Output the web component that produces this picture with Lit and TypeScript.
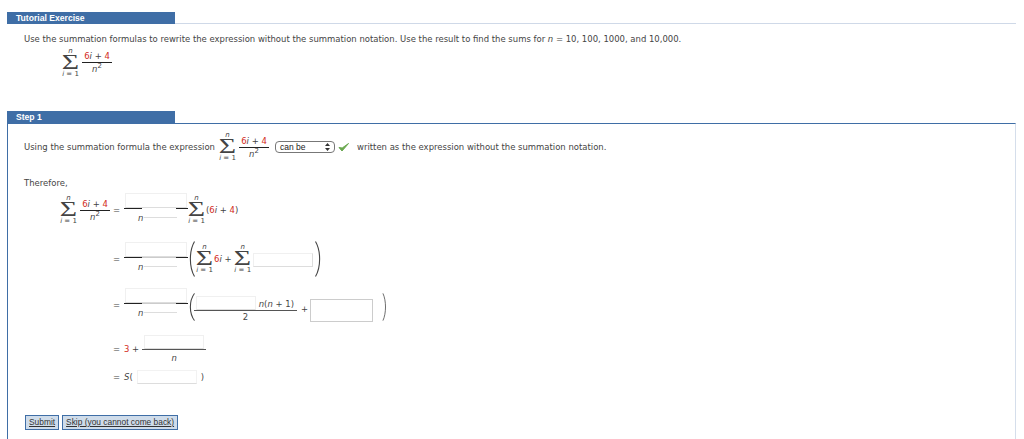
import { LitElement, html, css, svg } from "lit";
import { customElement } from "lit/decorators.js";

const sum = () => html`<span class="sum"><i class="lim">n</i><span class="sig">Σ</span><span class="low"><i>i</i> = 1</span></span>`;
const expr = html`<span class="frac main"><span class="top"><span class="red">6</span><i>i</i> + <span class="red">4</span></span><span class="bar dark"></span><span class="bot"><i>n</i><sup>2</sup></span></span>`;
const blank = html`<span class="frac blank"><span class="top"><span class="ans"></span></span><span class="bar gap"></span><span class="bot nline"><i>n</i><span class="rule"></span></span></span>`;
const paren = (cls: string, close = false) => html`<svg class="paren ${cls}" viewBox="0 0 8 36" preserveAspectRatio="none">${svg`<path d="${close ? "M1.5 0.5C7 10 7 26 1.5 35.5" : "M6.5 0.5C1 10 1 26 6.5 35.5"}" fill="none" stroke="#444" stroke-width="1.1"/>`}</svg>`;

@customElement("app-root")
export class AppRoot extends LitElement {
  static styles = css`
    :host { display: block; width: 1024px; height: 439px; overflow: hidden; background: #fff; font: 8.48px/12px "DejaVu Sans", Verdana, sans-serif; color: #444; }
    .tab { width: 168px; height: 12px; background: #3f6ea6; color: #fff; font: bold 8.6px/12px "Liberation Sans", Arial, sans-serif; padding-left: 9px; box-sizing: border-box; }
    .tab.first { height: 11px; line-height: 13px; }
    .page { padding: 12px 8px 0 7px; }
    .rule-top { height: 1px; background: linear-gradient(to right, #3f6ea6 168px, #cfd9e8 168px); }
    .intro { padding: 9px 0 0 17px; height: 87px; box-sizing: border-box; }
    .intro p { margin: 0; }
    .intro .line { height: 12px; }
    .intro .eq { display: flex; align-items: center; margin: 2px 0 0 38px; height: 31px; }
    .stepbox { border-left: 1px solid #3f6ea6; border-right: 1px solid #d5deeb; border-top: 1px solid #3f6ea6; height: 320px; padding: 8px 0 0 16px; box-sizing: border-box; }
    .usage { display: flex; align-items: center; height: 30px; }
    .usage .sum { margin-left: 4px; }
    .sel { display: flex; align-items: center; justify-content: space-between; box-sizing: border-box; width: 60px; height: 12px; margin-left: 6px; border: 1px solid #777; border-radius: 4px; padding: 0 4px; color: #222; font: 8.5px/10px "Liberation Sans", Arial, sans-serif; }
    .chk { margin: 0 8px 0 3px; }
    .therefore { margin-top: 15px; height: 12px; }
    .row { display: flex; align-items: center; }
    .r1 { height: 36px; margin-top: 3px; padding-left: 36px; }
    .r2 { height: 40px; margin-top: 11px; }
    .r3 { height: 32px; margin-top: 10px; }
    .r4 { height: 32px; margin-top: 12px; }
    .r5 { height: 18px; margin-top: 3px; }
    .ind { padding-left: 89px; }
    .eqs { width: 11px; flex: none; }
    .lhs { display: inline-flex; align-items: center; width: 53px; }
    .sum { display: inline-flex; flex-direction: column; align-items: center; width: 17px; flex: none; color: #444; }
    .lim { font-size: 7px; line-height: 6px; }
    .sig { font: 22px/15px "Liberation Serif", serif; height: 16px; transform: scaleX(1.35); }
    .low { font-size: 7px; line-height: 7px; margin-top: 1px; white-space: nowrap; }
    .frac { display: inline-grid; grid-template-rows: 15px 1px 15px; justify-items: center; flex: none; }
    .top, .bot { display: flex; align-items: center; justify-content: center; white-space: pre; }
    .top { align-items: flex-end; }
    .bot { align-items: flex-start; }
    .main { width: 30px; margin-left: 3px; }
    .main .bot { line-height: 12px; }
    sup { font-size: 7px; line-height: 6px; }
    .bar { width: 100%; height: 1px; }
    .dark { background: #222; }
    .blank { width: 64px; margin-bottom: 4px; }
    .blank .gap { background: linear-gradient(to right, #222 18px, #ccc 18px, #ccc 52px, #222 52px); }
    .r1 .blank .gap { background: linear-gradient(to right, #222 18px, #fff 18px, #fff 52px, #222 52px); }
    .ans { display: block; width: 62px; height: 15px; box-sizing: border-box; border: 1px solid #f0f0f0; border-bottom-color: #ddd; }
    .nline { width: 100%; justify-content: flex-start; padding: 5px 0 0 14px; box-sizing: border-box; line-height: 8px; }
    .rule { width: 33px; height: 1px; background: #ddd; margin: 3px 0 0 1px; }
    .red { color: #d32a22; }
    .paren { flex: none; width: 8px; height: 36px; }
    .paren.sm { height: 28px; margin-top: 4px; }
    .paren.end { width: 5px; margin-left: 9px; }
    .wide { display: inline-block; width: 60px; height: 14px; box-sizing: border-box; border: 1px solid #f0f0f0; border-right-color: #ddd; border-bottom-color: #ddd; }
    .tail { margin-left: 2px; margin-right: 1px; margin-top: 1px; }
    .r2t { margin-left: 1px; }
    .inner { display: inline-grid; grid-template-rows: 15px 1px 13px; width: 103px; margin: 9px 0 0 -2px; flex: none; }
    .inner .bar { background: #555; }
    .inner .top { justify-content: flex-start; padding-left: 2px; }
    .inner .bot { justify-content: center; }
    .small { width: 60px; height: 14px; }
    .plus { margin: 8px 0 0 4px; }
    .box { width: 63px; height: 23px; box-sizing: border-box; border: 1px solid #ccc; flex: none; margin: 10px 0 0 2px; }
    .r5 .wide { border-color: #f2f2f2 #f2f2f2 #ddd; margin: 0 4px 0 4px; }
    .r4 .frac { width: 64px; margin-left: 3px; }
    .r4 .bar { background: #555; }
    .r4 .bot { padding-top: 2px; }
    .btns { display: flex; gap: 3px; margin: 29px 0 0 1px; }
    .btn { border: 1px solid #3f6ea6; background: #cfdcea; height: 15px; box-sizing: border-box; padding: 0 3px; font: 8.4px/13px "Liberation Sans", Arial, sans-serif; color: #333; text-decoration: underline; white-space: nowrap; }
  `;
  render() {
    return html`<div class="page">
      <div class="tab first">Tutorial Exercise</div>
      <div class="rule-top"></div>
      <div class="intro">
        <p class="line">Use the summation formulas to rewrite the expression without the summation notation. Use the result to find the sums for <i>n</i> = 10, 100, 1000, and 10,000.</p>
        <div class="eq">${sum()}${expr}</div>
      </div>
      <div class="tab">Step 1</div>
      <div class="stepbox">
        <div class="usage">
          <span>Using the summation formula the expression</span>
          ${sum()}${expr}
          <span class="sel">can be<svg width="5" height="8" viewBox="0 0 5 8"><path d="M2.5 0 5 3H0zM2.5 8 0 5h5z" fill="#333"/></svg></span>
          <svg class="chk" width="11" height="10" viewBox="0 0 11 10"><path d="M1 5.5 4 9 10.5 1.5 4.2 6z" fill="#6aa84f" stroke="#6aa84f" stroke-width="1"/></svg>
          <span>written as the expression without the summation notation.</span>
        </div>
        <div class="therefore">Therefore,</div>
        <div class="row r1">
          <span class="lhs">${sum()}${expr}</span><span class="eqs">=</span>${blank}${sum()}<span class="r2t">(<span class="red">6</span><i>i</i> + <span class="red">4</span>)</span>
        </div>
        <div class="row r2 ind">
          <span class="eqs">=</span>${blank}${paren("")}${sum()}
          <span class="r2t"><span class="red">6</span><i>i</i> +&nbsp;</span>${sum()}
          <span class="wide tail"></span>${paren("", true)}
        </div>
        <div class="row r3 ind">
          <span class="eqs">=</span>${blank}${paren("sm")}
          <span class="inner"><span class="top"><span class="ans small"></span>&nbsp;<i>n</i>(<i>n</i> + 1)</span><span class="bar"></span><span class="bot">2</span></span>
          <span class="plus">+</span><span class="box"></span>${paren("sm end", true)}
        </div>
        <div class="row r4 ind">
          <span class="eqs">=</span><span><span class="red">3</span> +</span>
          <span class="frac"><span class="top"><span class="ans small"></span></span><span class="bar"></span><span class="bot"><i>n</i></span></span>
        </div>
        <div class="row r5 ind"><span class="eqs">=</span><span><i>S</i>(</span><span class="wide"></span><span>)</span></div>
        <div class="btns"><span class="btn">Submit</span><span class="btn">Skip (you cannot come back)</span></div>
      </div>
    </div>`;
  }
}
